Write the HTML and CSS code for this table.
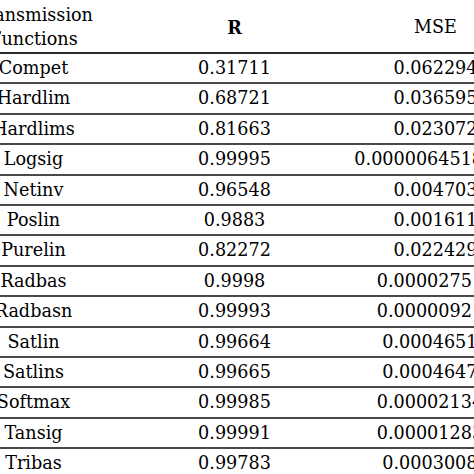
FILE: index.html
```html
<!DOCTYPE html>
<html lang="en">
<head>
<meta charset="utf-8">
<title>Transmission functions</title>
<link rel="stylesheet" href="styles.css">
</head>
<body>
<div class="viewport">
  <table class="results">
    <colgroup><col class="col"><col class="col"><col class="col"></colgroup>
    <thead>
      <tr><th>Transmission<br>Functions</th><th class="bold">R</th><th>MSE</th></tr>
    </thead>
    <tbody>
      <tr><td>Compet</td><td>0.31711</td><td>0.062294</td></tr>
      <tr><td>Hardlim</td><td>0.68721</td><td>0.036595</td></tr>
      <tr><td>Hardlims</td><td>0.81663</td><td>0.023072</td></tr>
      <tr><td>Logsig</td><td>0.99995</td><td>0.0000064518273</td></tr>
      <tr><td>Netinv</td><td>0.96548</td><td>0.004703</td></tr>
      <tr><td>Poslin</td><td>0.9883</td><td>0.001611</td></tr>
      <tr><td>Purelin</td><td>0.82272</td><td>0.022429</td></tr>
      <tr><td>Radbas</td><td>0.9998</td><td>0.000027518</td></tr>
      <tr><td>Radbasn</td><td>0.99993</td><td>0.000009215</td></tr>
      <tr><td>Satlin</td><td>0.99664</td><td>0.00046512</td></tr>
      <tr><td>Satlins</td><td>0.99665</td><td>0.00046473</td></tr>
      <tr><td>Softmax</td><td>0.99985</td><td>0.000021347</td></tr>
      <tr><td>Tansig</td><td>0.99991</td><td>0.000012836</td></tr>
      <tr><td>Tribas</td><td>0.99783</td><td>0.00030084</td></tr>
    </tbody>
  </table>
</div>
</body>
</html>
```
FILE: styles.css
```css
html, body {
  margin: 0;
  padding: 0;
  background: #ffffff;
}

.viewport {
  width: 474px;
  height: 474px;
  overflow: hidden;
  background: #ffffff;
}

.results {
  margin-left: -67px;
  width: 603px;
  table-layout: fixed;
  border-collapse: separate;
  border-spacing: 0;
  font-family: "DejaVu Serif", "Liberation Serif", serif;
  font-size: 17.6px;
  color: #000000;
}

.col {
  width: 201px;
}

.results th {
  font-weight: normal;
  text-align: center;
  vertical-align: middle;
  line-height: 24px;
  padding: 1.2px 0 0 0;
  height: 48px;
  border-bottom: 2px solid #2a2a2a;
  white-space: nowrap;
}

.results th.bold {
  font-weight: bold;
  padding-top: 4px;
}

.results td {
  text-align: center;
  line-height: 28.4px;
  padding: 0;
  border-bottom: 2px solid #4a4a4a;
  white-space: nowrap;
}
```
